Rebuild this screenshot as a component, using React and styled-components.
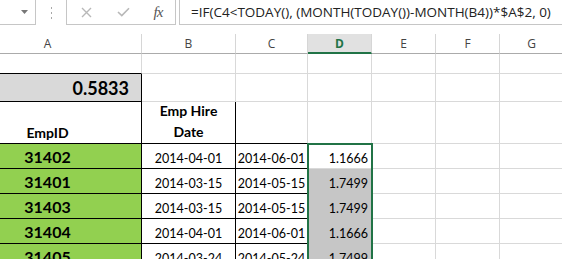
import React from 'react';
import styled, { createGlobalStyle } from 'styled-components';

const GlobalStyle = createGlobalStyle`
  html, body { margin: 0; padding: 0; background: #fff; overflow: hidden; }
  #root { width: 562px; height: 259px; overflow: hidden; }
`;

const COLS = '188px 94px 72px 64px 64px 64px 64px';
const GREEN = '#217346';

const Page = styled.div`
  width: 562px;
  height: 259px;
  overflow: hidden;
  background: #fff;
`;

const FormulaBar = styled.div`
  display: flex;
  height: 25px;
`;

const NameBox = styled.div`
  width: 36px;
  box-sizing: border-box;
  border-right: 1px solid #c6c6c6;
  border-bottom: 1px solid #c6c6c6;
  display: flex;
  align-items: center;
  justify-content: flex-end;
  padding-right: 7px;
`;

const Grip = styled.div`
  width: 30px;
  display: flex;
  flex-direction: column;
  align-items: center;
  justify-content: center;
  gap: 3px;
  & > span {
    width: 1px;
    height: 2px;
    background: #a8a8a8;
  }
`;

const ButtonBox = styled.div`
  width: 110px;
  box-sizing: border-box;
  border-left: 1px solid #c6c6c6;
  border-right: 1px solid #c6c6c6;
  border-bottom: 1px solid #c6c6c6;
  display: flex;
  align-items: center;
`;

const BarButton = styled.div`
  width: ${p => p.$w}px;
  display: flex;
  align-items: center;
  justify-content: center;
  color: ${p => (p.$active ? '#444' : '#b8b8b8')};
`;

const Fx = styled.span`
  font-family: 'Liberation Serif', serif;
  font-style: italic;
  font-size: 15px;
  color: #555;
  letter-spacing: -1px;
`;

const FormulaInput = styled.div`
  flex: 1;
  margin-left: 3px;
  box-sizing: border-box;
  border-left: 1px solid #c6c6c6;
  border-bottom: 1px solid #c6c6c6;
  padding-left: 11px;
  display: flex;
  align-items: center;
  font-family: 'Open Sans', sans-serif;
  font-size: 13.5px;
  color: #222;
  white-space: nowrap;
  overflow: hidden;
`;

const HeaderRow = styled.div`
  display: grid;
  grid-template-columns: ${COLS};
  margin-top: 9px;
  margin-left: -46px;
  height: 20px;
`;

const HeaderCell = styled.div`
  box-sizing: border-box;
  display: flex;
  align-items: center;
  justify-content: center;
  font-family: 'Open Sans', sans-serif;
  font-size: 12px;
  color: ${p => (p.$active ? GREEN : '#444')};
  font-weight: ${p => (p.$active ? 700 : 400)};
  background: ${p => (p.$active ? '#e1e1e1' : '#fff')};
  border-right: 1px solid #d6d6d6;
  border-bottom: ${p => (p.$active ? `2px solid ${GREEN}` : '1px solid #ababab')};
`;

const Sheet = styled.div`
  position: relative;
  display: grid;
  grid-template-columns: ${COLS};
  grid-template-rows: 20px 28px 42px repeat(5, 25px);
  margin-left: -46px;
`;

const Cell = styled.div`
  box-sizing: border-box;
  display: flex;
  flex-direction: column;
  justify-content: flex-end;
  align-items: ${p => p.$align || 'center'};
  padding: 0 ${p => p.$padR ?? 3}px ${p => p.$padB ?? 3}px 3px;
  background: ${p => p.$bg || '#fff'};
  border-right: 1px solid ${p => (p.$br ? '#000' : p.$grid || '#d9d9d9')};
  border-bottom: 1px solid ${p => (p.$bb ? '#000' : p.$grid || '#d9d9d9')};
  font-family: Lato, 'Open Sans', sans-serif;
  font-size: ${p => p.$size || 12.5}px;
  font-weight: ${p => (p.$bold ? 700 : 400)};
  color: #000;
  line-height: ${p => p.$lh || 1};
  white-space: nowrap;
  text-align: center;
`;

const Selection = styled.div`
  position: absolute;
  left: 353px;
  top: 89px;
  width: 66px;
  height: 140px;
  box-sizing: border-box;
  border: 2px solid ${GREEN};
  border-bottom: none;
  pointer-events: none;
`;

const CloseIcon = () => (
  <svg width="11" height="11" viewBox="0 0 11 11">
    <path d="M1 1 L10 10 M10 1 L1 10" stroke="currentColor" strokeWidth="1.4" fill="none" />
  </svg>
);

const CheckIcon = () => (
  <svg width="13" height="10" viewBox="0 0 13 10">
    <path d="M1 5 L4.8 8.6 L12 1.2" stroke="currentColor" strokeWidth="1.6" fill="none" />
  </svg>
);

const DropArrow = () => (
  <svg width="7" height="4" viewBox="0 0 7 4">
    <path d="M0 0 L7 0 L3.5 4 Z" fill="#777" />
  </svg>
);

const rows = [
  ['31402', '2014-04-01', '2014-06-01', '1.1666'],
  ['31401', '2014-03-15', '2014-05-15', '1.7499'],
  ['31403', '2014-03-15', '2014-05-15', '1.7499'],
  ['31404', '2014-04-01', '2014-06-01', '1.1666'],
  ['31405', '2014-03-24', '2014-05-24', '1.7499'],
];

const letters = ['A', 'B', 'C', 'D', 'E', 'F', 'G'];

export default function App() {
  return (
    <Page>
      <GlobalStyle />
      <FormulaBar>
        <NameBox>
          <DropArrow />
        </NameBox>
        <Grip>
          <span />
          <span />
          <span />
        </Grip>
        <ButtonBox>
          <BarButton $w={38}>
            <CloseIcon />
          </BarButton>
          <BarButton $w={36}>
            <CheckIcon />
          </BarButton>
          <BarButton $w={34} $active>
            <Fx>fx</Fx>
          </BarButton>
        </ButtonBox>
        <FormulaInput>=IF(C4&lt;TODAY(), (MONTH(TODAY())-MONTH(B4))*$A$2, 0)</FormulaInput>
      </FormulaBar>

      <HeaderRow>
        {letters.map(l => (
          <HeaderCell key={l} $active={l === 'D'}>
            {l}
          </HeaderCell>
        ))}
      </HeaderRow>

      <Sheet>
        {/* row 1 */}
        <Cell $bb />
        <Cell />
        <Cell />
        <Cell />
        <Cell />
        <Cell />
        <Cell />

        {/* row 2 */}
        <Cell $bg="#d9d9d9" $br $bb $align="flex-end" $padR={12} $padB={4} $bold $size={18}>
          0.5833
        </Cell>
        <Cell />
        <Cell />
        <Cell />
        <Cell />
        <Cell />
        <Cell />

        {/* row 3 */}
        <Cell $br $bb $bold $size={14} $padB={3}>
          EmpID
        </Cell>
        <Cell $br $bb $bold $size={14} $lh={1.45} $padB={1}>
          Emp Hire
          <br />
          Date
        </Cell>
        <Cell $bb />
        <Cell />
        <Cell />
        <Cell />
        <Cell />

        {rows.map((r, i) => (
          <React.Fragment key={r[0] + i}>
            <Cell $bg="#92d050" $br $bb $bold $size={16} $padB={3}>
              {r[0]}
            </Cell>
            <Cell $br $bb>{r[1]}</Cell>
            <Cell $br $bb>{r[2]}</Cell>
            <Cell
              $align="flex-end"
              $bg={i === 0 ? '#fff' : '#c6c6c6'}
              $grid={i === 0 ? '#d9d9d9' : '#c6c6c6'}
            >
              {r[3]}
            </Cell>
            <Cell />
            <Cell />
            <Cell />
          </React.Fragment>
        ))}
        <Selection />
      </Sheet>
    </Page>
  );
}
